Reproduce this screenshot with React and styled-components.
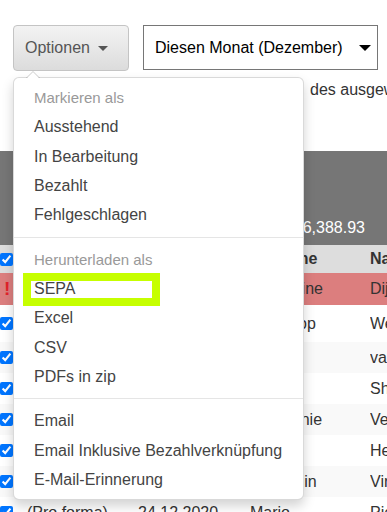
import React from 'react'
import styled, { createGlobalStyle } from 'styled-components'

const GlobalStyle = createGlobalStyle`
  html, body {
    margin: 0;
    padding: 0;
    overflow: hidden;
    background: #fff;
  }
  body {
    font-family: "Liberation Sans", Arial, sans-serif;
    font-size: 16px;
    color: #333;
  }
`

const Page = styled.div`
  width: 387px;
  height: 512px;
  overflow: hidden;
`

const Toolbar = styled.div`
  display: flex;
  align-items: flex-start;
  gap: 14px;
  padding: 25px 0 0 13px;
`

const ButtonGroup = styled.div`
  position: relative;
  display: flex;
  z-index: 10;
`

const OptionsButton = styled.button`
  display: flex;
  align-items: center;
  gap: 8px;
  box-sizing: border-box;
  width: 116px;
  height: 46px;
  padding: 0 0 0 11px;
  border: 1px solid #c4c4c4;
  border-radius: 4px;
  background: linear-gradient(#f3f3f3, #dcdcdc);
  font: inherit;
  color: #555;
  cursor: pointer;
`

const Caret = styled.span`
  width: 0;
  height: 0;
  border-left: ${p => p.$w}px solid transparent;
  border-right: ${p => p.$w}px solid transparent;
  border-top: ${p => p.$w}px solid ${p => p.$color};
`

const Select = styled.div`
  display: flex;
  align-items: center;
  justify-content: space-between;
  box-sizing: border-box;
  width: 235px;
  height: 45px;
  padding: 0 6px 0 11px;
  border: 1px solid #767676;
  background: #fff;
  color: #000;
`

const Menu = styled.ul`
  position: absolute;
  top: calc(100% + 6px);
  left: 0;
  box-sizing: border-box;
  width: 291px;
  margin: 0;
  padding: 5px 0;
  list-style: none;
  background: #fff;
  border: 1px solid rgba(0, 0, 0, 0.15);
  border-radius: 6px;
  box-shadow: 0 6px 12px rgba(0, 0, 0, 0.175);

  &::before,
  &::after {
    content: '';
    position: absolute;
    width: 0;
    height: 0;
    border-left: 7px solid transparent;
    border-right: 7px solid transparent;
  }
  &::before {
    left: 12px;
    top: -7px;
    border-bottom: 7px solid rgba(0, 0, 0, 0.2);
  }
  &::after {
    left: 13px;
    top: -6px;
    border-left-width: 6px;
    border-right-width: 6px;
    border-bottom: 6px solid #fff;
  }
`

const MenuHeader = styled.li`
  padding: 3px 20px;
  line-height: 23.33px;
  font-size: 15px;
  color: #999;
`

const MenuItem = styled.li`
  position: relative;
  padding: 3px 20px;
  line-height: 23.33px;
  color: #444;
  white-space: nowrap;
  cursor: pointer;
`

const Divider = styled.li`
  height: 1px;
  margin: 7px 0;
  background: #e5e5e5;
`

const Highlight = styled.span`
  position: absolute;
  left: 9px;
  top: -1px;
  box-sizing: border-box;
  width: 137px;
  height: 33px;
  border: 8px solid #c6ff00;
  pointer-events: none;
`

const InfoLine = styled.div`
  margin-top: 8px;
  padding-left: 13px;
  line-height: 22px;
  white-space: nowrap;
  color: #333;
`

const Lead = styled.span`
  display: inline-block;
  width: 297px;
  overflow: hidden;
  vertical-align: top;
`

const Summary = styled.div`
  display: flex;
  align-items: flex-end;
  justify-content: flex-end;
  box-sizing: border-box;
  height: 94px;
  margin-top: 50px;
  padding: 0 22px 8px 0;
  background: #767676;
  color: #fff;
  line-height: 18px;
  white-space: nowrap;
`

const Row = styled.div`
  display: grid;
  grid-template-columns: 27px 111px 112px 120px 200px;
  align-items: center;
  height: ${p => p.$h}px;
  background: ${p =>
    p.$tone === 'head' ? '#dddddd'
      : p.$tone === 'danger' ? '#dc7e7e'
      : p.$tone === 'stripe' ? '#f9f9f9'
      : '#fff'};
  font-weight: ${p => (p.$tone === 'head' ? 700 : 400)};
  color: #333;
  white-space: nowrap;
`

const Cell = styled.div`
  overflow: hidden;
`

const Check = styled.input`
  display: block;
  width: 13px;
  height: 13px;
  margin: 0;
  accent-color: #0075ff;
`

const Alert = styled.span`
  display: block;
  padding-left: 4px;
  font-size: 19px;
  font-weight: 700;
  color: #e3232b;
`

const rows = [
  { tone: 'danger', h: 32, status: 'Fehlgeschlagen', date: '02.12.2020', first: 'Josephine', last: 'Dijkstra' },
  { h: 37, status: 'Bezahlt', date: '03.12.2020', first: 'Jan-Joop', last: 'Wessels' },
  { tone: 'stripe', h: 31, status: 'Bezahlt', date: '05.12.2020', first: 'Eva', last: 'van Dijk' },
  { h: 31, status: 'Ausstehend', date: '08.12.2020', first: 'Tom', last: 'Shaw' },
  { tone: 'stripe', h: 31, status: 'Bezahlt', date: '10.12.2020', first: 'Stephanie', last: 'Verhoeven' },
  { h: 31, status: 'Bezahlt', date: '14.12.2020', first: 'Lars', last: 'Hendriks' },
  { tone: 'stripe', h: 31, status: 'Ausstehend', date: '18.12.2020', first: 'Benjamin', last: 'Virtanen' },
  { h: 31, status: '(Pro forma)', date: '24.12.2020', first: 'Mario', last: 'Pichler' },
]

const App = () => (
  <Page>
    <GlobalStyle />
    <Toolbar>
      <ButtonGroup>
        <OptionsButton>
          Optionen
          <Caret $w={5} $color="#555" />
        </OptionsButton>
        <Menu>
          <MenuHeader>Markieren als</MenuHeader>
          <MenuItem>Ausstehend</MenuItem>
          <MenuItem>In Bearbeitung</MenuItem>
          <MenuItem>Bezahlt</MenuItem>
          <MenuItem>Fehlgeschlagen</MenuItem>
          <Divider />
          <MenuHeader>Herunterladen als</MenuHeader>
          <MenuItem>
            SEPA
            <Highlight />
          </MenuItem>
          <MenuItem>Excel</MenuItem>
          <MenuItem>CSV</MenuItem>
          <MenuItem>PDFs in zip</MenuItem>
          <Divider />
          <MenuItem>Email</MenuItem>
          <MenuItem>Email Inklusive Bezahlverknüpfung</MenuItem>
          <MenuItem>E-Mail-Erinnerung</MenuItem>
        </Menu>
      </ButtonGroup>
      <Select>
        Diesen Monat (Dezember)
        <Caret $w={6} $color="#000" />
      </Select>
    </Toolbar>

    <InfoLine>
      <Lead>Gesamtbetrag aller Rechnungen</Lead>des ausgewählten Zeitraums
    </InfoLine>

    <Summary>Gesamt: €16,388.93</Summary>

    <Row $tone="head" $h={28}>
      <Cell><Check type="checkbox" defaultChecked /></Cell>
      <Cell>Status</Cell>
      <Cell>Datum</Cell>
      <Cell>Vorname</Cell>
      <Cell>Nachname</Cell>
    </Row>
    {rows.map((r, i) => (
      <Row key={i} $tone={r.tone} $h={r.h}>
        <Cell>
          {r.tone === 'danger' ? <Alert>!</Alert> : <Check type="checkbox" defaultChecked />}
        </Cell>
        <Cell>{r.status}</Cell>
        <Cell>{r.date}</Cell>
        <Cell>{r.first}</Cell>
        <Cell>{r.last}</Cell>
      </Row>
    ))}
  </Page>
)

export default App
